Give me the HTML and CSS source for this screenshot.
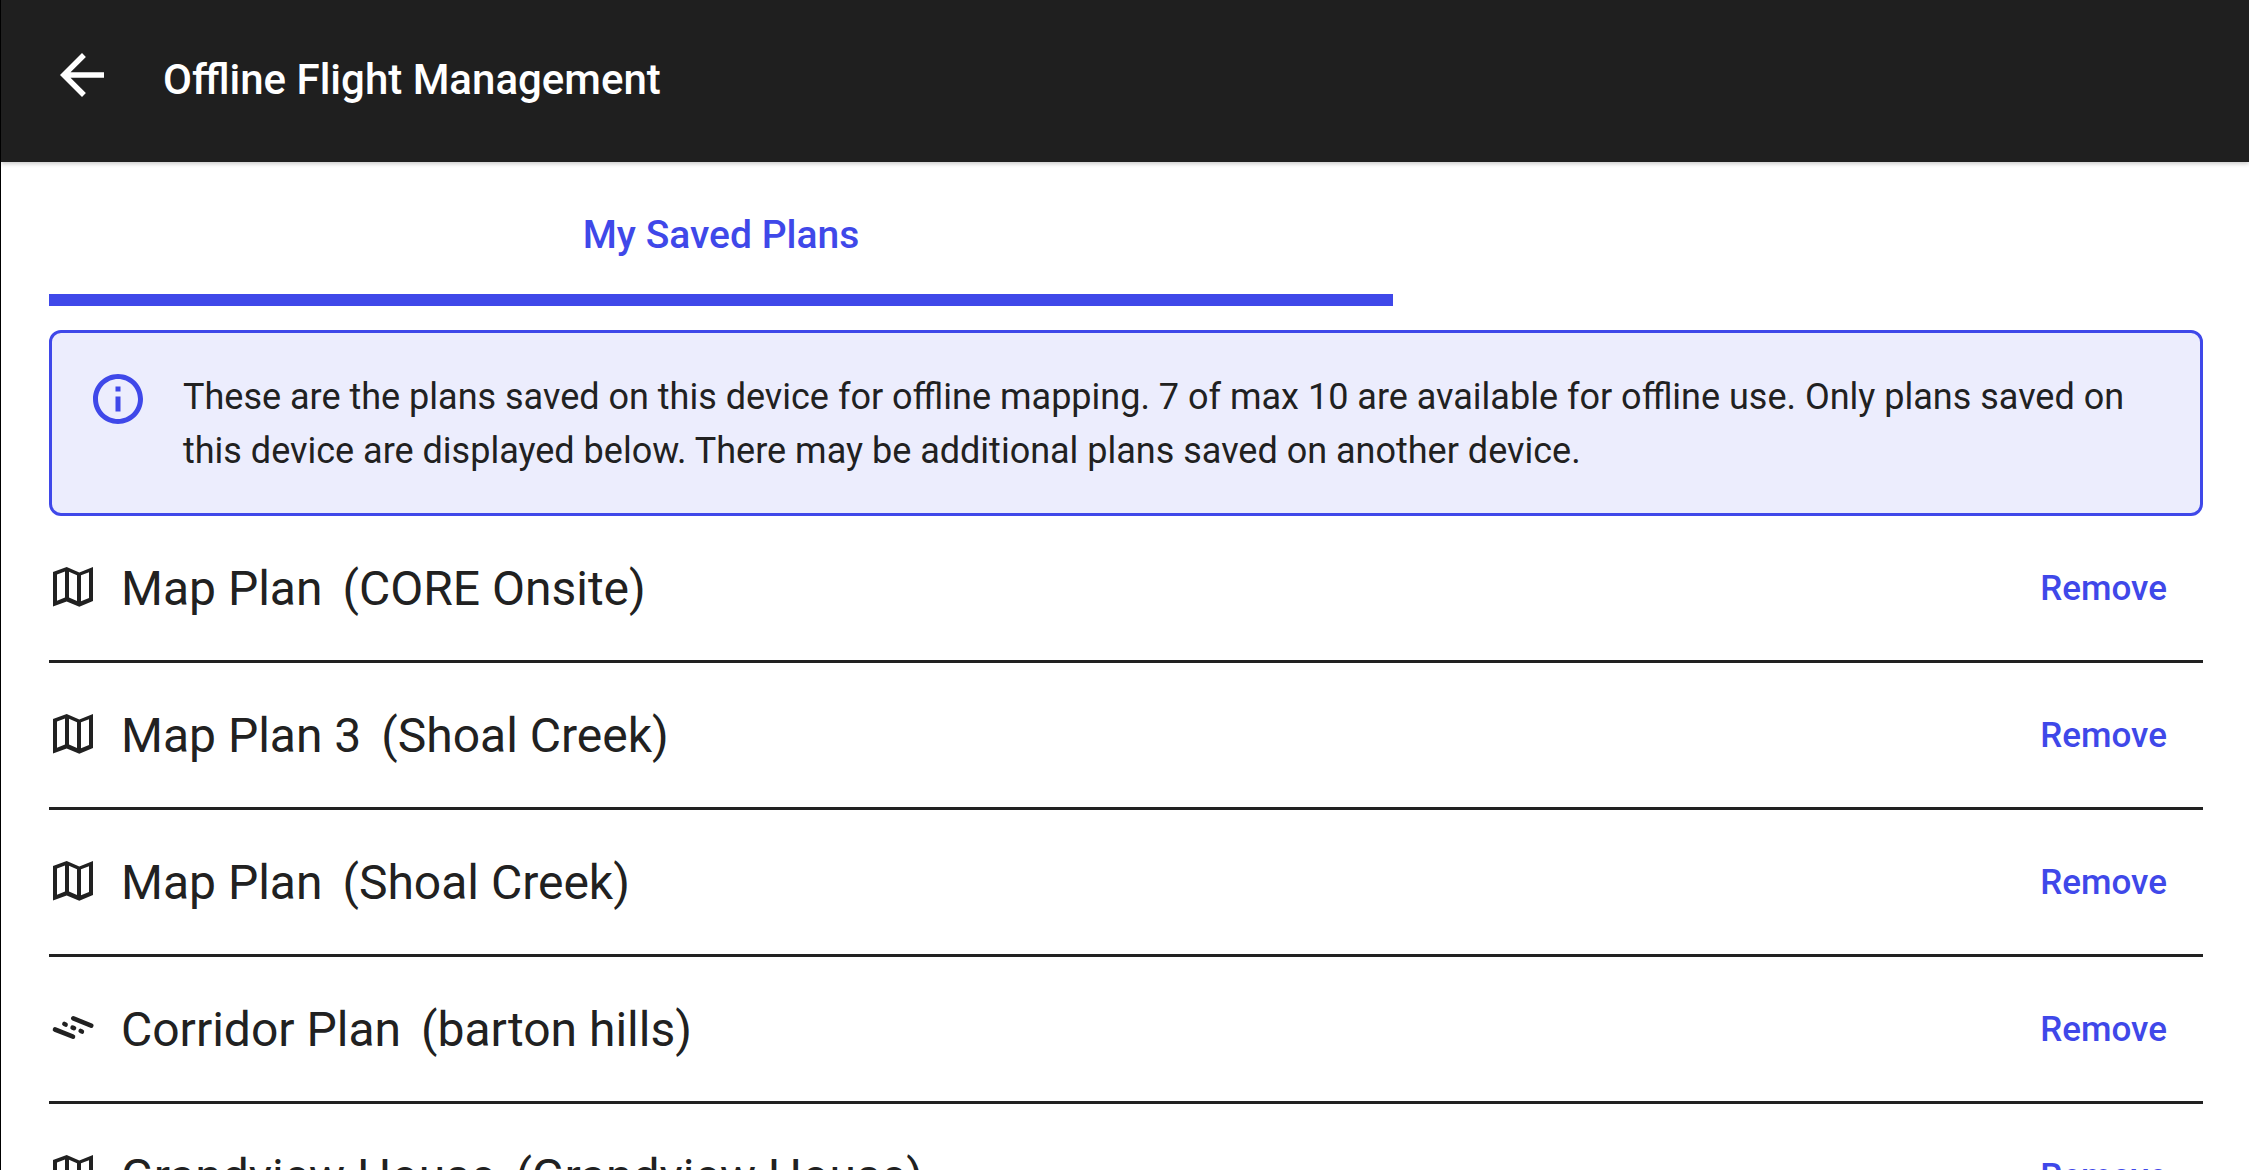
FILE: index.html
```html
<!doctype html>
<html lang="en">
  <head>
    <meta charset="UTF-8" />
    <meta name="viewport" content="width=device-width, initial-scale=1.0" />
    <title>Offline Flight Management</title>
    <link rel="stylesheet" href="styles.css">
  </head>
  <body>
    <!-- shared icons -->
    <svg class="sprite" aria-hidden="true">
      <symbol id="icon-map" viewBox="0 0 48 48">
        <path
          fill="currentColor"
          fill-rule="evenodd"
          d="M4 7L17.7 2L30.3 7.5L44 2V36L30.3 41.7L17.7 36.5L4 41.5ZM8 9.5V35.7L16 32.5V6.5ZM20 6.7V32.5L28 36V10.3ZM32 10.3V36.2L40 33V7.3Z"
        />
      </symbol>
      <symbol id="icon-corridor" viewBox="0 0 48 48">
        <g fill="none" stroke="currentColor" stroke-width="4.6" stroke-linecap="round">
          <path d="M6 23.5L24 30.6" />
          <path d="M24.3 12.3L42.2 19.6" />
          <path d="M15.4 18L16.6 18.5" />
          <path d="M23.6 21.6L25 22.2" />
          <path d="M31.7 25L32.9 25.5" />
        </g>
      </symbol>
    </svg>

    <header class="header">
      <button class="back-btn" type="button" aria-label="Back">
        <svg viewBox="0 0 24 24">
          <path
            fill="currentColor"
            d="M20 11H7.83l5.59-5.59L12 4l-8 8 8 8 1.41-1.41L7.83 13H20v-2z"
          />
        </svg>
      </button>
      <h1>Offline Flight Management</h1>
    </header>

    <main class="content">
      <nav class="tabs">
        <button class="tab" type="button">My Saved Plans</button>
      </nav>

      <div class="notice">
        <svg class="notice-icon" viewBox="2 2 20 20">
          <path
            fill="currentColor"
            d="M11 7h2v2h-2V7zm0 4h2v6h-2v-6zm1-9C6.48 2 2 6.48 2 12s4.48 10 10 10 10-4.48 10-10S17.52 2 12 2zm0 18c-4.41 0-8-3.59-8-8s3.59-8 8-8 8 3.59 8 8-3.59 8-8 8z"
          />
        </svg>
        <p>
          These are the plans saved on this device for offline mapping. 7 of max
          10 are available for offline use. Only plans saved on this device are
          displayed below. There may be additional plans saved on another
          device.
        </p>
      </div>

      <ul class="plans">
        <li class="plan">
          <svg class="plan-icon"><use href="#icon-map" /></svg>
          <span class="plan-name">Map Plan</span>
          <span class="plan-site">(CORE Onsite)</span>
          <button class="remove-btn" type="button">Remove</button>
        </li>
        <li class="plan">
          <svg class="plan-icon"><use href="#icon-map" /></svg>
          <span class="plan-name">Map Plan 3</span>
          <span class="plan-site">(Shoal Creek)</span>
          <button class="remove-btn" type="button">Remove</button>
        </li>
        <li class="plan">
          <svg class="plan-icon"><use href="#icon-map" /></svg>
          <span class="plan-name">Map Plan</span>
          <span class="plan-site">(Shoal Creek)</span>
          <button class="remove-btn" type="button">Remove</button>
        </li>
        <li class="plan">
          <svg class="plan-icon"><use href="#icon-corridor" /></svg>
          <span class="plan-name">Corridor Plan</span>
          <span class="plan-site">(barton hills)</span>
          <button class="remove-btn" type="button">Remove</button>
        </li>
        <li class="plan">
          <svg class="plan-icon"><use href="#icon-map" /></svg>
          <span class="plan-name">Grandview House</span>
          <span class="plan-site">(Grandview House)</span>
          <button class="remove-btn" type="button">Remove</button>
        </li>
      </ul>
    </main>
  </body>
</html>
```
FILE: styles.css
```css
* {
  box-sizing: border-box;
  margin: 0;
  padding: 0;
}

body {
  height: 100vh;
  overflow: hidden;
  border-left: 1px solid #000;
  background: #fff;
  color: #212121;
  font-family: Roboto, "Liberation Sans", sans-serif;
}

button {
  border: none;
  background: none;
  color: inherit;
  font-family: inherit;
  cursor: pointer;
}

svg {
  display: block;
}

.sprite {
  position: absolute;
  width: 0;
  height: 0;
}

.header {
  display: flex;
  align-items: flex-start;
  gap: 48px;
  padding: 42px 48px 44px;
  background: #1f1f1f;
  color: #fff;
  box-shadow: 0 2px 4px rgba(0, 0, 0, 0.2);
}

.back-btn svg {
  width: 66px;
  height: 66px;
}

h1 {
  font-size: 42px;
  font-weight: 500;
  line-height: 76px;
}

.content {
  padding: 14px 46px 0 48px;
}

.tabs {
  display: flex;
  margin-bottom: 24px;
}

.tab {
  width: 62.4%;
  padding: 32px 0;
  border-bottom: 12px solid #3f48e9;
  color: #3f48e9;
  font-size: 39px;
  font-weight: 500;
  line-height: 54px;
}

.notice {
  display: flex;
  gap: 40px;
  padding: 37px 32px 35px 41px;
  border: 3px solid #3f48e9;
  border-radius: 12px;
  background: #ecedfd;
  font-size: 36px;
  line-height: 54px;
}

.notice-icon {
  flex: none;
  width: 50px;
  height: 50px;
  margin-top: 4px;
  color: #3f48e9;
}

.plans {
  list-style: none;
}

.plan {
  display: flex;
  align-items: center;
  padding: 43px 36px 41px 0;
  border-bottom: 3px solid #212121;
  font-size: 48px;
  line-height: 60px;
}

.plan-icon {
  width: 48px;
  height: 48px;
  margin-right: 24px;
}

.plan-name {
  margin-right: 20px;
}

.remove-btn {
  margin-left: auto;
  color: #3f48e9;
  font-size: 35px;
  font-weight: 500;
  line-height: 54px;
}
```
